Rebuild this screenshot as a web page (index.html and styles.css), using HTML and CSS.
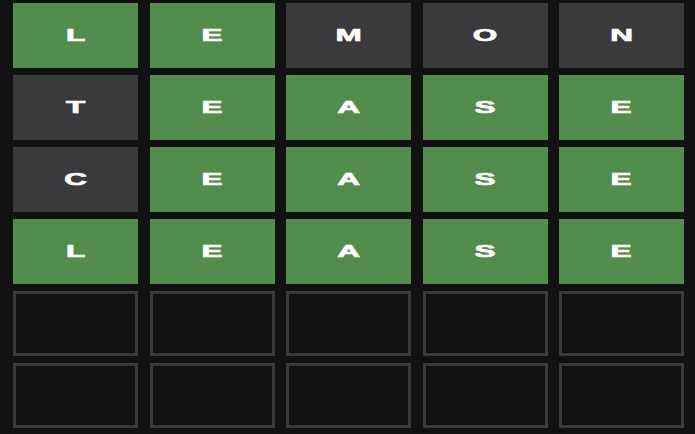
FILE: index.html
```html
<!DOCTYPE html>
<html lang="en">
<head>
  <meta charset="UTF-8">
  <title>Wordle</title>
  <link rel="stylesheet" href="styles.css">
</head>
<body>
  <main class="board">
    <div class="tile correct"><span>L</span></div>
    <div class="tile correct"><span>E</span></div>
    <div class="tile absent"><span>M</span></div>
    <div class="tile absent"><span>O</span></div>
    <div class="tile absent"><span>N</span></div>

    <div class="tile absent"><span>T</span></div>
    <div class="tile correct"><span>E</span></div>
    <div class="tile correct"><span>A</span></div>
    <div class="tile correct"><span>S</span></div>
    <div class="tile correct"><span>E</span></div>

    <div class="tile absent"><span>C</span></div>
    <div class="tile correct"><span>E</span></div>
    <div class="tile correct"><span>A</span></div>
    <div class="tile correct"><span>S</span></div>
    <div class="tile correct"><span>E</span></div>

    <div class="tile correct"><span>L</span></div>
    <div class="tile correct"><span>E</span></div>
    <div class="tile correct"><span>A</span></div>
    <div class="tile correct"><span>S</span></div>
    <div class="tile correct"><span>E</span></div>

    <div class="tile empty"></div>
    <div class="tile empty"></div>
    <div class="tile empty"></div>
    <div class="tile empty"></div>
    <div class="tile empty"></div>

    <div class="tile empty"></div>
    <div class="tile empty"></div>
    <div class="tile empty"></div>
    <div class="tile empty"></div>
    <div class="tile empty"></div>
  </main>
</body>
</html>
```
FILE: styles.css
```css
body {
  margin: 0;
  padding: 0;
  background: #121213;
  font-family: "Liberation Sans", Arial, sans-serif;
}

.board {
  display: grid;
  grid-template-columns: repeat(5, 1fr);
  grid-auto-rows: 65px;
  column-gap: 11.5px;
  row-gap: 7px;
  padding: 3px 11px 0 13px;
}

.tile {
  display: flex;
  align-items: center;
  justify-content: center;
  box-sizing: border-box;
}

.tile span {
  color: #ffffff;
  font-weight: 700;
  font-size: 18px;
  display: inline-block;
  -webkit-text-stroke: 0.7px #ffffff;
  transform: scale(1.75, 0.95);
}

.correct {
  background: #538d4e;
}

.absent {
  background: #3a3a3c;
}

.empty {
  border: 3px solid #3a3a3c;
}
```
